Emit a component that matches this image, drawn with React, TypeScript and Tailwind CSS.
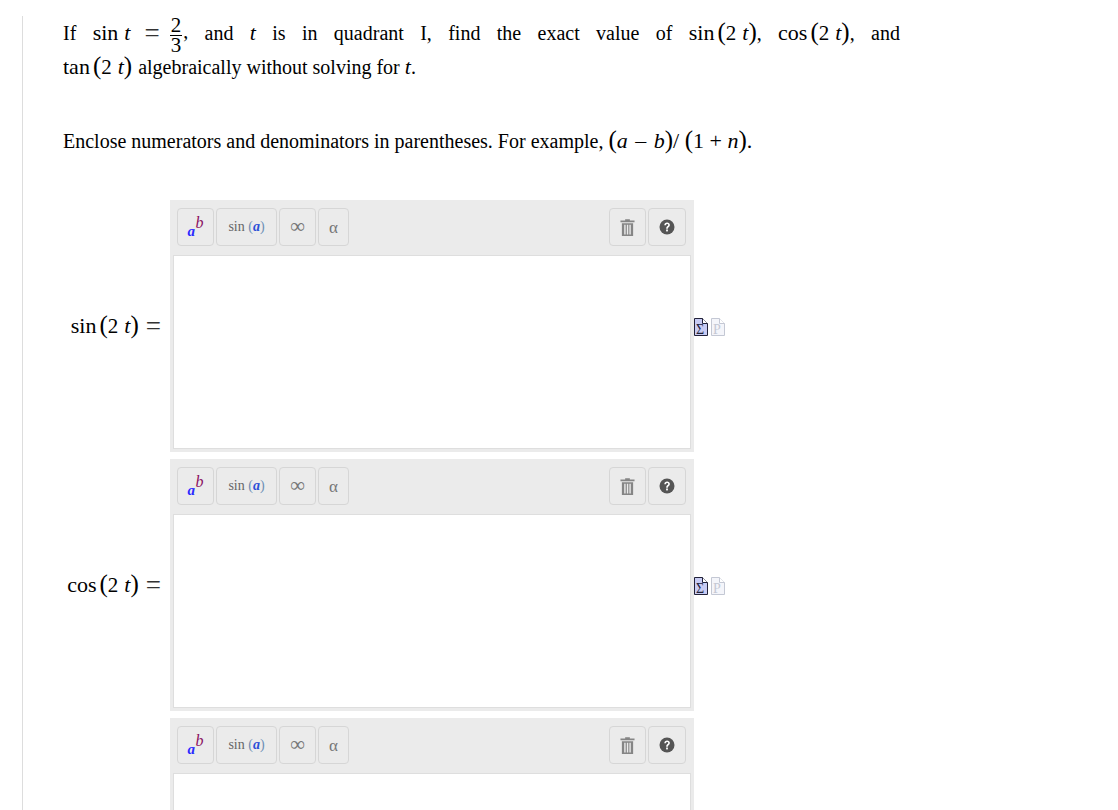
const serif = "font-['Liberation_Serif',serif]";

function Paren({ children }: { children: React.ReactNode }) {
  return (
    <span className="whitespace-nowrap">
      <span className="text-[25px] leading-none font-light">(</span>
      {children}
      <span className="text-[25px] leading-none font-light">)</span>
    </span>
  );
}

function Fn({ name, arg }: { name: string; arg: string }) {
  return (
    <span className="text-[21px] whitespace-nowrap">
      <span className="text-[22px]">{name}</span>
      <span className="ml-[3px]" />
      <Paren>
        2<span className="ml-[6px] text-[22px] italic">{arg}</span>
      </Paren>
    </span>
  );
}

function ToolButton({ children, className }: { children: React.ReactNode; className: string }) {
  return (
    <div className={`flex h-[38px] items-center justify-center rounded-[4px] border border-[#d6d6d6] ${className}`}>
      {children}
    </div>
  );
}

function TrashIcon() {
  return (
    <svg width="15" height="19" viewBox="0 0 16 19">
      <path d="M5.500 2V.8h5V2H15.500V4H.5V2z" fill="#858585" />
      <path d="M2 5h12v13.500H2zM4.500 6.500v10.500h1.500V6.500zM7.300 6.500v10.500h1.500V6.500zM10 6.500v10.500h1.500V6.500z" fill="#858585" fillRule="evenodd" />
    </svg>
  );
}

function HelpIcon() {
  return (
    <svg width="16" height="16" viewBox="0 0 16 16">
      <circle cx="8" cy="8" r="7.500" fill="#555" />
      <path d="M5.300 6.200C5.400 4.500 6.500 3.500 8.100 3.500c1.600 0 2.800 1 2.800 2.400 0 2.100-2.100 2-2.100 3.800H7.200c0-2.500 2-2.500 2-3.700 0-.6-.4-1-1.100-1-.7 0-1.100.4-1.200 1.200z" fill="#fff" />
      <rect x="7.100" y="10.500" width="1.800" height="1.900" fill="#fff" />
    </svg>
  );
}

function FileIcon({ letter, active }: { letter: string; active: boolean }) {
  const line = active ? "#22223a" : "#c4c8d4";
  const fill = active ? "#c8ccf4" : "#f4f5fa";
  return (
    <svg width="14" height="18" viewBox="0 0 14 18">
      <path d="M.5.5h8l5 5v12h-13z" fill={fill} stroke={line} />
      <path d="M8.500.5v5h5" fill="#fff" stroke={line} />
      <text x="6" y="15.500" textAnchor="middle" fontSize="14" fontFamily="'Liberation Serif',serif" fill={line}>
        {letter}
      </text>
    </svg>
  );
}

function Toolbar() {
  return (
    <div className="flex h-[55px] items-start gap-[2px] pl-[7px] pr-[8px] pt-[8px]">
      <ToolButton className="w-[37px]">
        <span className="relative h-[24px] w-[22px] italic">
          <span className="absolute bottom-[0px] left-[3px] text-[15px] leading-none font-bold text-[#2b2bff]">a</span>
          <span className="absolute left-[11px] top-[0px] text-[16px] leading-none text-[#8a1060]">b</span>
        </span>
      </ToolButton>
      <ToolButton className="w-[61px] pb-[2px] text-[14px] text-[#666]">
        <span>
          sin <span className="text-[#6d8fb5]">(</span>
          <span className="font-bold text-[#2b4fd8] italic">a</span>
          <span className="text-[#6d8fb5]">)</span>
        </span>
      </ToolButton>
      <ToolButton className="w-[37px] text-[21px] text-[#777]">∞</ToolButton>
      <ToolButton className="w-[31px] pt-[2px] text-[17px] text-[#777]">α</ToolButton>
      <div className="flex-1" />
      <ToolButton className="w-[37px]">
        <TrashIcon />
      </ToolButton>
      <ToolButton className="w-[38px]">
        <HelpIcon />
      </ToolButton>
    </div>
  );
}

function AnswerRow({ fn }: { fn: string }) {
  return (
    <div className="flex items-center">
      <div className="flex w-[99px] items-center justify-end pr-[1px] text-[21px] whitespace-nowrap">
        <Fn name={fn} arg="t" />
        <span className="ml-[7px] text-[27px] leading-none text-[#333]">=</span>
      </div>
      <div className="ml-[8px] h-[252px] w-[524px] shrink-0 bg-[#ebebeb]">
        <Toolbar />
        <div className="mx-[3px] h-[194px] border border-[#dedede] bg-white" />
      </div>
      <div className="flex items-center gap-[3px] pt-[1px]">
        <FileIcon letter="Σ" active />
        <FileIcon letter="P" active={false} />
      </div>
    </div>
  );
}

export default function App() {
  return (
    <div className={`h-screen overflow-hidden bg-white pl-[22px] text-black ${serif}`}>
      <div className="h-full border-l border-[#dddddd] pl-[40px]">
        <div className="mt-[16px] flex h-[34px] w-[837px] items-center justify-between text-[20px] leading-[34px] whitespace-nowrap">
          <span>If</span>
          <span className="flex items-center">
            <span className="text-[22px]">sin</span>
            <span className="ml-[6px] text-[22px] italic">t</span>
            <span className="ml-[14px] text-[27px] leading-none text-[#333]">=</span>
            <span className="ml-[10px] inline-flex translate-y-[2px] flex-col items-center text-[21px] leading-[19px]">
              <span className="border-b border-black px-[1px]">2</span>
              <span>3</span>
            </span>
            <span className="ml-[1px] -translate-y-[2px]">,</span>
          </span>
          <span>and</span>
          <span className="text-[22px] italic">t</span>
          <span>is</span>
          <span>in</span>
          <span>quadrant</span>
          <span>I,</span>
          <span>find</span>
          <span>the</span>
          <span>exact</span>
          <span>value</span>
          <span>of</span>
          <span>
            <Fn name="sin" arg="t" />,
          </span>
          <span>
            <Fn name="cos" arg="t" />,
          </span>
          <span>and</span>
        </div>
        <p className="h-[34px] text-[20px] leading-[34px] whitespace-nowrap">
          <Fn name="tan" arg="t" /> <span className="ml-[1px]">algebraically without solving for</span> <span className="text-[22px] italic">t</span>.
        </p>
        <p className="mt-[40px] h-[34px] text-[20px] leading-[34px] whitespace-nowrap">
          Enclose numerators and denominators in parentheses. For example,{" "}
          <span className="text-[22px] whitespace-nowrap">
            <Paren>
              <span className="italic">a</span> <span className="mx-[2px]">–</span> <span className="italic">b</span>
            </Paren>
            / <Paren><span>1 + <span className="italic">n</span></span></Paren>.
          </span>
        </p>
        <div className="mt-[42px] flex flex-col gap-[7px]">
          <AnswerRow fn="sin" />
          <AnswerRow fn="cos" />
          <AnswerRow fn="tan" />
        </div>
      </div>
    </div>
  );
}
